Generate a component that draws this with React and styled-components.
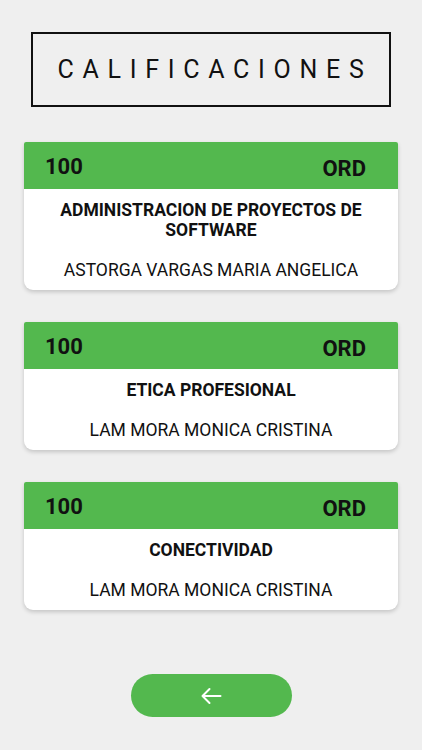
import React from "react";
import styled, { createGlobalStyle } from "styled-components";

const grades = [
  {
    score: 100,
    type: "ORD",
    subject: "ADMINISTRACION DE PROYECTOS DE SOFTWARE",
    teacher: "ASTORGA VARGAS MARIA ANGELICA",
  },
  {
    score: 100,
    type: "ORD",
    subject: "ETICA PROFESIONAL",
    teacher: "LAM MORA MONICA CRISTINA",
  },
  {
    score: 100,
    type: "ORD",
    subject: "CONECTIVIDAD",
    teacher: "LAM MORA MONICA CRISTINA",
  },
];

const App = () => {
  return (
    <Wrapper>
      <GlobalStyle />
      <TitleBox>
        <h1>CALIFICACIONES</h1>
      </TitleBox>

      <List>
        {grades.map((g, i) => (
          <Card key={i}>
            <Header>
              <Score>{g.score}</Score>
              <Type>{g.type}</Type>
            </Header>
            <Body>
              <Subject>{g.subject}</Subject>
              <Teacher>{g.teacher}</Teacher>
            </Body>
          </Card>
        ))}
      </List>

      <BackBtn aria-label="back">
        <svg width="22" height="18" viewBox="0 0 22 18" fill="none">
          <path
            d="M20.5 9H2.5M9.5 2L2.5 9l7 7"
            stroke="#fff"
            strokeWidth="2"
            strokeLinecap="round"
            strokeLinejoin="round"
          />
        </svg>
      </BackBtn>
    </Wrapper>
  );
};

const GlobalStyle = createGlobalStyle`
  body {
    margin: 0;
    background: #efefef;
    font-family: Roboto, "Liberation Sans", sans-serif;
  }
`;

const Wrapper = styled.main`
  min-height: 750px;
  display: flex;
  flex-direction: column;
  align-items: center;
  padding-top: 32px;
  box-sizing: border-box;
`;

const TitleBox = styled.div`
  width: 360px;
  height: 75px;
  box-sizing: border-box;
  border: 2px solid #111;
  display: grid;
  place-items: center;

  h1 {
    margin: 0;
    padding-left: 8px;
    font-size: 25px;
    font-weight: 400;
    letter-spacing: 8.7px;
    color: #111;
  }
`;

const List = styled.div`
  display: flex;
  flex-direction: column;
  gap: 32px;
  margin-top: 35px;
`;

const Card = styled.section`
  width: 374px;
  background: white;
  border-radius: 2px 2px 9px 9px;
  box-shadow: 0 2px 4px rgba(0, 0, 0, 0.18);
  overflow: hidden;
`;

const Header = styled.div`
  height: 47px;
  box-sizing: border-box;
  background: #53b84e;
  display: flex;
  justify-content: space-between;
  align-items: flex-start;
  padding: 12px 32px 0 21px;
  color: #111;
  font-size: 22px;
  font-weight: 700;
`;

const Score = styled.span`
  line-height: 26px;
`;

const Type = styled(Score)`
  margin-top: 2px;
`;

const Body = styled.div`
  display: flex;
  flex-direction: column;
  gap: 20px;
  padding: 11px 14px 10px;
  text-align: center;
  font-size: 17.5px;
  line-height: 20px;
  color: #111;
`;

const Subject = styled.div`
  font-weight: 700;
`;

const Teacher = styled.div`
  font-weight: 400;
`;

const BackBtn = styled.button`
  margin-top: 64px;
  width: 161px;
  height: 43px;
  border: none;
  border-radius: 22px;
  background: #53b84e;
  display: grid;
  place-items: center;
  cursor: pointer;
`;

export default App;
